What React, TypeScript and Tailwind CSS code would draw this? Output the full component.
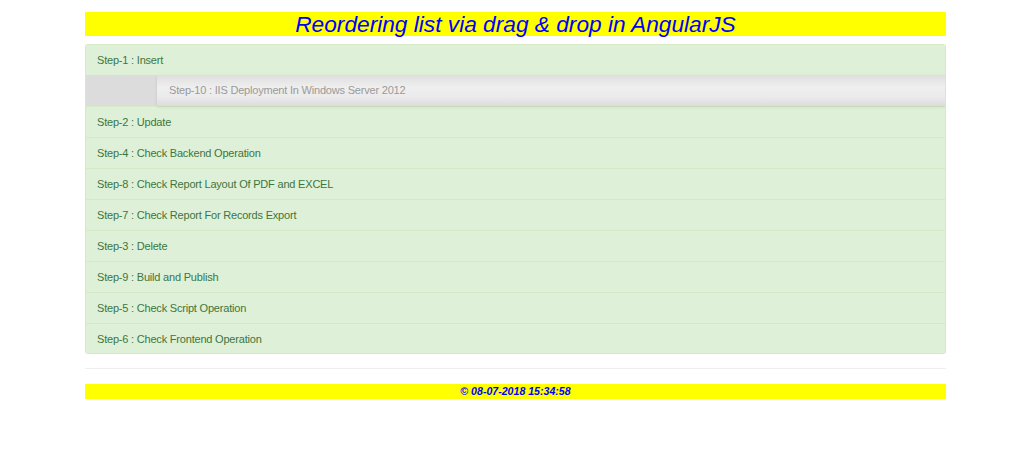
import React from "react";

const steps = [
  "Step-2 : Update",
  "Step-4 : Check Backend Operation",
  "Step-8 : Check Report Layout Of PDF and EXCEL",
  "Step-7 : Check Report For Records Export",
  "Step-3 : Delete",
  "Step-9 : Build and Publish",
  "Step-5 : Check Script Operation",
  "Step-6 : Check Frontend Operation",
];

function Row({ label }: { label: string }) {
  return (
    <li className="h-[31px] flex items-center pl-[11px] bg-[#dff0d8] text-[#3c763d] border-t border-[#d6e9c6] text-[11px] tracking-[-0.2px]">
      {label}
    </li>
  );
}

export default function App() {
  return (
    <div className="bg-white min-h-[455px] w-[1024px] font-['Liberation_Sans',Arial,sans-serif]">
      <div className="mx-[85px] w-[861px] pt-[12px]">
        <h1 className="h-[24px] bg-[#ffff00] text-[#0000ff] italic text-[22.7px] leading-[24px] text-center">
          Reordering list via drag &amp; drop in AngularJS
        </h1>
        <ul className="mt-[8px] h-[310px] border border-[#d6e9c6] border-t-0 rounded-[3px] overflow-hidden">
          <li className="h-[31px] flex items-center pl-[11px] bg-[#dff0d8] text-[#3c763d] border-t border-[#d6e9c6] text-[11px] tracking-[-0.2px]">
            Step-1 : Insert
          </li>
          <li className="h-[31px] flex bg-[#dcdcdc]">
            <div className="ml-[71px] flex-1 flex items-center pl-[12px] text-[11px] tracking-[-0.2px] text-[#9a9a9a] bg-[linear-gradient(to_bottom,#dedede_0%,#efefef_40%,#ebebeb_70%,#dcdcdc_100%)] shadow-[0_1px_3px_rgba(0,0,0,0.1)]">
              Step-10 : IIS Deployment In Windows Server 2012
            </div>
          </li>
          {steps.map((s) => (
            <Row key={s} label={s} />
          ))}
        </ul>
        <hr className="mt-[14px] border-t border-[#eeeeee]" />
        <div className="mt-[15px] h-[15px] bg-[#ffff00] text-[#0000ff] italic font-bold text-[10.6px] leading-[15px] text-center">
          © 08-07-2018 15:34:58
        </div>
      </div>
    </div>
  );
}
